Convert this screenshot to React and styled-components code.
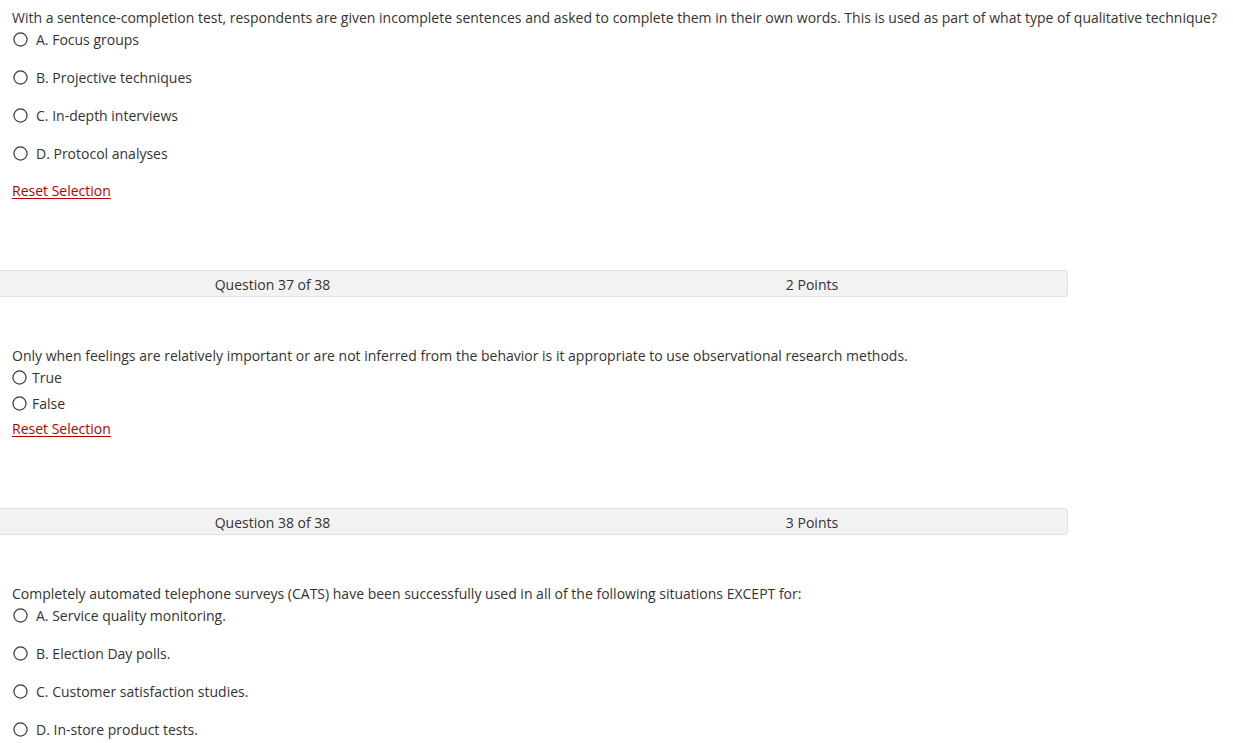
import React from "react";
import styled, { createGlobalStyle } from "styled-components";

const GlobalStyle = createGlobalStyle`
    body {
        margin: 0;
        background: #fff;
        font-family: "Open Sans", "Liberation Sans", sans-serif;
        font-size: 14px;
        color: #333;
    }
`;

const questions = [
    {
        id: 36,
        text: "With a sentence-completion test, respondents are given incomplete sentences and asked to complete them in their own words. This is used as part of what type of qualitative technique?",
        kind: "choice",
        options: [
            "A. Focus groups",
            "B. Projective techniques",
            "C. In-depth interviews",
            "D. Protocol analyses",
        ],
        reset: true,
    },
    {
        id: 37,
        points: 2,
        text: "Only when feelings are relatively important or are not inferred from the behavior is it appropriate to use observational research methods.",
        kind: "bool",
        options: ["True", "False"],
        reset: true,
    },
    {
        id: 38,
        points: 3,
        text: "Completely automated telephone surveys (CATS) have been successfully used in all of the following situations EXCEPT for:",
        kind: "choice",
        options: [
            "A. Service quality monitoring.",
            "B. Election Day polls.",
            "C. Customer satisfaction studies.",
            "D. In-store product tests.",
        ],
        reset: false,
    },
];

const Radio = ({ tight }) => (
    <Circle $tight={tight} viewBox="0 0 16 16">
        <circle cx="8" cy="8" r="7" fill="#fff" stroke="#3a3a3a" strokeWidth="1.3" />
    </Circle>
);

const App = () => {
    return (
        <>
            <GlobalStyle />
            <Page>
                {questions.map((q, i) => (
                    <React.Fragment key={q.id}>
                        {q.points && (
                            <HeaderBar>
                                <HeaderCell>Question {q.id} of 38</HeaderCell>
                                <HeaderCell $right>{q.points} Points</HeaderCell>
                            </HeaderBar>
                        )}
                        <Question $first={i === 0}>
                            <Prompt>{q.text}</Prompt>
                            {q.options.map((opt) =>
                                q.kind === "bool" ? (
                                    <BoolRow key={opt}>
                                        <Radio tight />
                                        {opt}
                                    </BoolRow>
                                ) : (
                                    <ChoiceRow key={opt}>
                                        <Radio />
                                        {opt}
                                    </ChoiceRow>
                                )
                            )}
                            {q.reset && (
                                <ResetLink href="#" $bool={q.kind === "bool"}>
                                    Reset Selection
                                </ResetLink>
                            )}
                        </Question>
                    </React.Fragment>
                ))}
            </Page>
        </>
    );
};

const Page = styled.div`
    width: 1233px;
    min-height: 743px;
`;

const Question = styled.div`
    padding: ${(p) => (p.$first ? "8px" : "49px")} 12px 0 12px;
    margin-bottom: 69px;
`;

const Prompt = styled.div`
    line-height: 20px;
    height: 20px;
    white-space: nowrap;
`;

const ChoiceRow = styled.label`
    display: flex;
    align-items: center;
    height: 20px;
    margin-top: 1px;
    margin-bottom: 18px;
    & + & {
        margin-top: 0;
    }
`;

const BoolRow = styled.label`
    display: flex;
    align-items: center;
    height: 20px;
    margin-top: 1px;
    & + & {
        margin-top: 6px;
    }
`;

const Circle = styled.svg`
    width: 15px;
    height: 15px;
    flex: none;
    margin-left: ${(p) => (p.$tight ? "0" : "1px")};
    margin-right: ${(p) => (p.$tight ? "5px" : "8px")};
`;

const ResetLink = styled.a`
    display: block;
    width: max-content;
    line-height: 20px;
    margin-top: ${(p) => (p.$bool ? "6px" : "1px")};
    color: #b80000;
    text-decoration: underline;
    text-underline-offset: 2px;
`;

const HeaderBar = styled.div`
    display: grid;
    grid-template-columns: 545px 1fr;
    width: 1067px;
    height: 25px;
    box-sizing: content-box;
    background: #f2f2f2;
    border: 1px solid #e0e0e0;
    border-left: none;
    border-radius: 0 4px 4px 0;
    align-items: center;
`;

const HeaderCell = styled.div`
    text-align: center;
    padding-left: ${(p) => (p.$right ? "12px" : "0")};
    margin-top: 1px;
`;

export default App;
